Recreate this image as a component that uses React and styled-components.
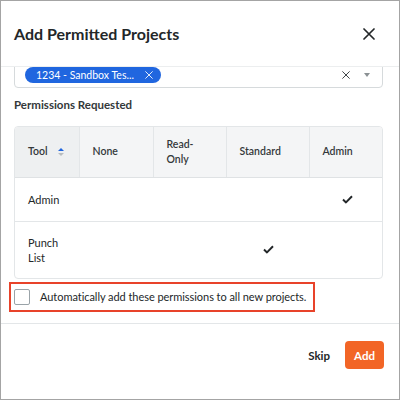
import React from "react";
import styled, { createGlobalStyle } from "styled-components";

const GlobalStyle = createGlobalStyle`
  html, body {
    margin: 0;
    padding: 0;
    background: #fff;
  }
  body {
    font-family: Lato, "Open Sans", Arial, sans-serif;
    color: #232729;
  }
`;

const Frame = styled.div`
  width: 400px;
  height: 400px;
  box-sizing: border-box;
  border: 1px solid #a4a4a4;
  display: flex;
  flex-direction: column;
  background: #fff;
  overflow: hidden;
`;

const Header = styled.div`
  height: 66px;
  flex: none;
  display: flex;
  align-items: center;
  justify-content: space-between;
  padding: 0 24px 0 13px;
  border-bottom: 1px solid #eceeef;
  box-sizing: border-box;
`;

const Title = styled.h1`
  margin: 0;
  font-size: 16px;
  font-weight: 700;
  color: #232729;
`;

const IconButton = styled.button`
  border: none;
  background: none;
  padding: 0;
  display: flex;
  align-items: center;
  justify-content: center;
  cursor: pointer;
  color: ${p => p.color || "#232729"};
`;

const Body = styled.div`
  flex: 1;
  overflow: hidden;
  padding: 0 16px 0 13px;
  display: flex;
  flex-direction: column;
`;

const SelectBox = styled.div`
  margin-top: -8px;
  height: 29px;
  flex: none;
  box-sizing: border-box;
  border: 1px solid #d6dadc;
  border-radius: 4px;
  display: flex;
  align-items: center;
  padding: 3px 12px 0 10px;
  gap: 8px;
`;

const Chip = styled.span`
  display: inline-flex;
  align-items: center;
  gap: 11px;
  height: 16px;
  padding: 0 8px 0 11px;
  border-radius: 8px;
  background: #2066df;
  color: #fff;
  font-size: 10.5px;
  white-space: nowrap;
`;

const Spacer = styled.div`
  flex: 1;
`;

const Caret = styled.span`
  width: 0;
  height: 0;
  border-left: 3.5px solid transparent;
  border-right: 3.5px solid transparent;
  border-top: 4px solid #8b9194;
  margin-left: 6px;
`;

const SectionLabel = styled.div`
  margin-top: 9px;
  font-size: 11.5px;
  font-weight: 700;
  color: #33383a;
  height: 16px;
  line-height: 16px;
`;

const TableWrap = styled.div`
  margin-top: 13px;
  border: 1px solid #e3e6e8;
  border-radius: 4px;
  overflow: hidden;
`;

const Table = styled.table`
  width: 100%;
  border-collapse: collapse;
  table-layout: fixed;
`;

const Th = styled.th`
  width: ${p => p.w}px;
  height: 50px;
  box-sizing: border-box;
  background: ${p => (p.sorted ? "#eef0f1" : "#f4f5f6")};
  border-right: 1px solid #e3e6e8;
  border-bottom: 1px solid #dfe2e4;
  text-align: left;
  padding: 0 12px 0 13px;
  font-size: 10.5px;
  font-weight: 600;
  color: #33383a;
  line-height: 15px;
  &:last-child {
    border-right: none;
  }
`;

const SortWrap = styled.div`
  display: flex;
  align-items: center;
  justify-content: space-between;
  padding-right: 3px;
`;

const SortIcon = styled.span`
  display: flex;
  flex-direction: column;
  gap: 2px;
`;

const Tri = styled.span`
  width: 0;
  height: 0;
  border-left: 3px solid transparent;
  border-right: 3px solid transparent;
  ${p =>
    p.up
      ? `border-bottom: 3.5px solid #2066df;`
      : `border-top: 3.5px solid #b7bcbf;`}
`;

const Td = styled.td`
  height: ${p => p.h}px;
  padding: 0 12px 0 13px;
  font-size: 11px;
  line-height: 15px;
  color: #232729;
  border-top: 1px solid #e3e6e8;
  text-align: ${p => (p.center ? "center" : "left")};
`;

const CheckRow = styled.label`
  margin: 3px 0 0 -5px;
  width: 306px;
  height: 30px;
  box-sizing: border-box;
  border: 2px solid #e8432a;
  display: flex;
  align-items: center;
  gap: 10px;
  padding-left: 3px;
  font-size: 11px;
  letter-spacing: -0.05px;
  white-space: nowrap;
  color: #232729;
`;

const Box = styled.span`
  width: 14px;
  height: 14px;
  border: 1px solid #9aa3a8;
  border-radius: 2px;
  flex: none;
  background: #fff;
`;

const Footer = styled.div`
  height: 76px;
  flex: none;
  border-top: 1px solid #e3e6e8;
  display: flex;
  align-items: flex-start;
  justify-content: flex-end;
  padding: 17px 15px 0 0;
  gap: 15px;
  box-sizing: border-box;
`;

const Button = styled.button`
  font-family: inherit;
  font-size: 11.5px;
  font-weight: 700;
  border: none;
  border-radius: 4px;
  height: 28px;
  padding: 0 ${p => (p.primary ? "9px" : "0")};
  background: ${p => (p.primary ? "#f26526" : "transparent")};
  color: ${p => (p.primary ? "#fff" : "#232729")};
  cursor: pointer;
`;

const XIcon = ({ size = 12, stroke = 1.6, color = "currentColor" }) => (
  <svg width={size} height={size} viewBox="0 0 12 12">
    <path
      d="M1 1L11 11M11 1L1 11"
      stroke={color}
      strokeWidth={stroke}
      strokeLinecap="round"
    />
  </svg>
);

const Check = () => (
  <svg width="11" height="9" viewBox="0 0 11 9">
    <path
      d="M1 4.6L4 7.4L10 1.2"
      fill="none"
      stroke="#232729"
      strokeWidth="2"
      strokeLinejoin="round"
    />
  </svg>
);

const columns = [
  { key: "tool", label: "Tool", w: 64 },
  { key: "none", label: "None", w: 74 },
  { key: "read", label: "Read-Only", w: 73 },
  { key: "standard", label: "Standard", w: 83 },
  { key: "admin", label: "Admin", w: 75 },
];

const rows = [
  { tool: "Admin", level: "admin", h: 43 },
  { tool: "Punch List", level: "standard", h: 56 },
];

export default function App() {
  return (
    <Frame>
      <GlobalStyle />
      <Header>
        <Title>Add Permitted Projects</Title>
        <IconButton>
          <XIcon size={12} stroke={1.7} />
        </IconButton>
      </Header>
      <Body>
        <SelectBox>
          <Chip>
            1234 - Sandbox Tes...
            <XIcon size={8} stroke={1.3} />
          </Chip>
          <Spacer />
          <XIcon size={8} stroke={1.4} color="#33383a" />
          <Caret />
        </SelectBox>
        <SectionLabel>Permissions Requested</SectionLabel>
        <TableWrap>
          <Table>
            <thead>
              <tr>
                {columns.map(c => (
                  <Th key={c.key} w={c.w} sorted={c.key === "tool"}>
                    {c.key === "tool" ? (
                      <SortWrap>
                        {c.label}
                        <SortIcon>
                          <Tri up />
                          <Tri />
                        </SortIcon>
                      </SortWrap>
                    ) : c.key === "read" ? (
                      <>
                        Read-
                        <br />
                        Only
                      </>
                    ) : (
                      c.label
                    )}
                  </Th>
                ))}
              </tr>
            </thead>
            <tbody>
              {rows.map(r => (
                <tr key={r.tool}>
                  <Td h={r.h}>
                    {r.tool === "Punch List" ? (
                      <>
                        Punch
                        <br />
                        List
                      </>
                    ) : (
                      r.tool
                    )}
                  </Td>
                  {columns.slice(1).map(c => (
                    <Td key={c.key} h={r.h} center>
                      {r.level === c.key && <Check />}
                    </Td>
                  ))}
                </tr>
              ))}
            </tbody>
          </Table>
        </TableWrap>
        <CheckRow>
          <Box />
          Automatically add these permissions to all new projects.
        </CheckRow>
      </Body>
      <Footer>
        <Button>Skip</Button>
        <Button primary>Add</Button>
      </Footer>
    </Frame>
  );
}
